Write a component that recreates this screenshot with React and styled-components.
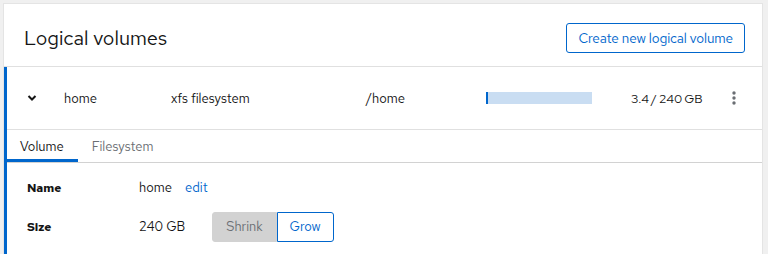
import React from 'react';
import styled, { createGlobalStyle } from 'styled-components';

const GlobalStyle = createGlobalStyle`
  body {
    margin: 0;
    background: #f0f0f0;
    font-family: "Red Hat Text", Inter, "Liberation Sans", sans-serif;
    color: #151515;
  }
`;

const Page = styled.div`
  padding: 4px 6px 0 4px;
  height: 254px;
  box-sizing: border-box;
  overflow: hidden;
`;

const Card = styled.div`
  background: #fff;
  height: 100%;
  box-shadow: 0 0 0 1px #e4e4e4;
`;

const Header = styled.div`
  display: flex;
  align-items: center;
  justify-content: space-between;
  height: 63px;
  padding: 6px 17px 0 20px;
  border-bottom: 1px solid #e0e0e0;
  box-sizing: border-box;
`;

const Title = styled.h2`
  margin: 0;
  font-size: 20px;
  font-weight: 400;
`;

const OutlineButton = styled.button`
  font-family: inherit;
  font-size: 13.5px;
  letter-spacing: -0.1px;
  color: #0066cc;
  background: #fff;
  border: 1px solid #0066cc;
  border-radius: 3px;
  height: 30px;
  padding: 0 11px;
`;

const Expanded = styled.div`
  border-left: 3px solid #0066cc;
`;

const Row = styled.div`
  display: grid;
  grid-template-columns: 57px 107px 195px 120px 106px 39px 1fr 40px;
  align-items: center;
  height: 63px;
  font-size: 13px;
  border-bottom: 1px solid #e0e0e0;
  box-sizing: border-box;
`;

const Toggle = styled.div`
  display: flex;
  justify-content: center;
  padding-right: 8px;
`;

const Bar = styled.div`
  height: 12px;
  background: #c9ddf2;
`;

const BarFill = styled.div`
  height: 100%;
  background: #0066cc;
`;

const Usage = styled.div`
  font-size: 12.5px;
  word-spacing: -0.8px;
`;

const Kebab = styled.div`
  display: flex;
  justify-content: center;
  padding-right: 16px;
`;

const Tabs = styled.div`
  display: flex;
  height: 33px;
  border-bottom: 1px solid #d2d2d2;
  box-sizing: border-box;
`;

const Tab = styled.div`
  display: flex;
  align-items: center;
  padding: 0 14px 0 ${p => (p.$first ? '16px' : '14px')};
  margin-left: ${p => (p.$first ? '-3px' : '0')};
  font-size: 13px;
  color: ${p => (p.$active ? '#151515' : '#6a6e73')};
  box-shadow: ${p => (p.$active ? 'inset 0 -3px 0 #0066cc' : 'none')};
`;

const Details = styled.div`
  display: grid;
  grid-template-columns: 112px 1fr;
  grid-auto-rows: 39px;
  align-items: center;
  padding: 5px 0 0 20px;
  font-size: 13px;
  height: 200px;
`;

const Label = styled.div`
  font-weight: 700;
  font-size: 12px;
`;

const Value = styled.div`
  display: flex;
  align-items: center;
  gap: 13px;
`;

const Link = styled.span`
  color: #0066cc;
`;

const Group = styled.div`
  display: flex;
  margin-left: 14px;
`;

const GroupButton = styled.button`
  font-family: inherit;
  font-size: 13px;
  height: 30px;
  padding: 0 ${p => (p.$disabled ? 13 : 12)}px;
  color: ${p => (p.$disabled ? '#6a6e73' : '#0066cc')};
  background: ${p => (p.$disabled ? '#d2d2d2' : '#fff')};
  border: 1px solid ${p => (p.$disabled ? '#d2d2d2' : '#0066cc')};
  border-radius: ${p => (p.$disabled ? '3px 0 0 3px' : '0 3px 3px 0')};
`;

const Chevron = () => (
  <svg width="10" height="8" viewBox="0 0 10 8">
    <path d="M1.5 2 L5 5.5 L8.5 2" fill="none" stroke="#151515" strokeWidth="2" />
  </svg>
);

const Dots = () => (
  <svg width="4" height="14" viewBox="0 0 4 14">
    <circle cx="2" cy="2" r="1.7" fill="#6a6e73" />
    <circle cx="2" cy="7" r="1.7" fill="#6a6e73" />
    <circle cx="2" cy="12" r="1.7" fill="#6a6e73" />
  </svg>
);

export default function App() {
  const used = 3.4;
  const total = 240;
  return (
    <Page>
      <GlobalStyle />
      <Card>
        <Header>
          <Title>Logical volumes</Title>
          <OutlineButton>Create new logical volume</OutlineButton>
        </Header>
        <Expanded>
          <Row>
            <Toggle><Chevron /></Toggle>
            <div>home</div>
            <div>xfs filesystem</div>
            <div>/home</div>
            <Bar>
              <BarFill style={{ width: `${Math.max(2, (used / total) * 100)}%` }} />
            </Bar>
            <div />
            <Usage>3.4 / 240 GB</Usage>
            <Kebab><Dots /></Kebab>
          </Row>
          <Tabs>
            <Tab $first $active>Volume</Tab>
            <Tab>Filesystem</Tab>
          </Tabs>
          <Details>
            <Label>Name</Label>
            <Value>home <Link>edit</Link></Value>
            <Label>Size</Label>
            <Value>
              240 GB
              <Group>
                <GroupButton $disabled>Shrink</GroupButton>
                <GroupButton>Grow</GroupButton>
              </Group>
            </Value>
          </Details>
        </Expanded>
      </Card>
    </Page>
  );
}
